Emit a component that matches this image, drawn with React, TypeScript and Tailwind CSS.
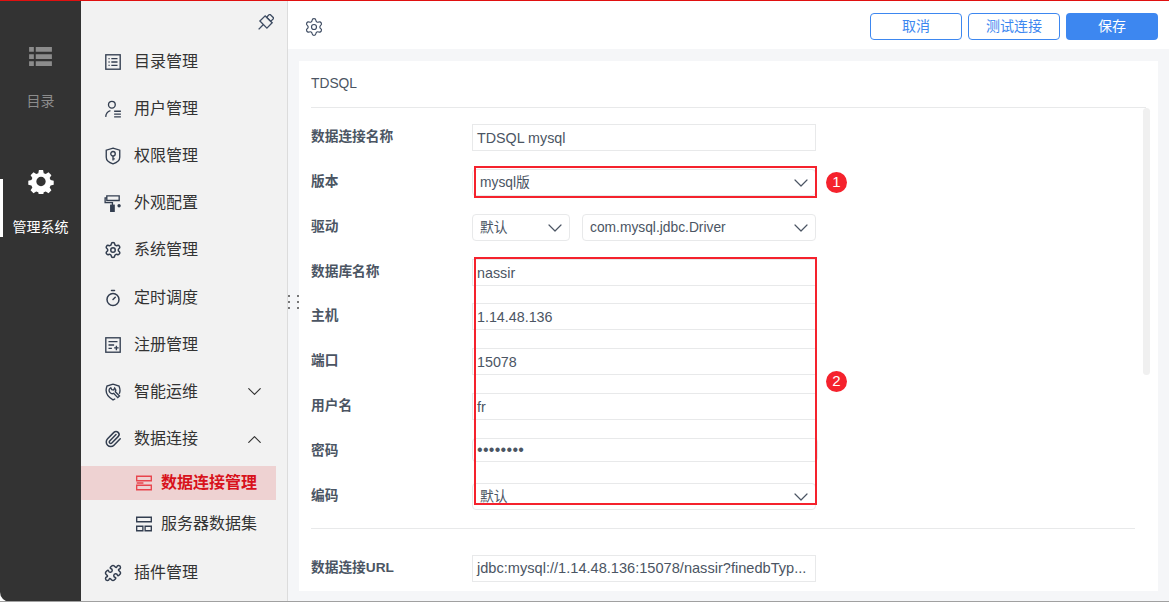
import React from 'react';
import { ChevronDown, ChevronUp, Paperclip, Puzzle, Settings, Timer } from 'lucide-react';

type IconProps = { className?: string };

const Svg: React.FC<React.PropsWithChildren<IconProps>> = ({ className, children }) => (
  <svg viewBox="0 0 16 16" fill="none" stroke="currentColor" strokeWidth="1.2" className={className}>
    {children}
  </svg>
);

const CatalogIcon = ({ className }: IconProps) => (
  <Svg className={className}>
    <rect x="1.6" y="1.6" width="12.8" height="12.8" />
    <path d="M4 5h1M6.5 5H12M4 8h1M6.5 8H12M4 11h1M6.5 11H12" />
  </Svg>
);

const UserIcon = ({ className }: IconProps) => (
  <Svg className={className}>
    <circle cx="7" cy="4.2" r="3" />
    <path d="M1.5 15c.2-3 2-5 4.2-5.6M9 10h6M9 12.5h6M9 15h6" />
  </Svg>
);

const ShieldIcon = ({ className }: IconProps) => (
  <Svg className={className}>
    <path d="M8 1l6 1.8v6.4c0 2.8-2.6 4.8-6 5.8-3.4-1-6-3-6-5.8V2.8z" />
    <circle cx="8" cy="6" r="2" />
    <path d="M8 8v4M8 10.5h1.6" />
  </Svg>
);

const RollerIcon = ({ className }: IconProps) => (
  <Svg className={className}>
    <path d="M2.5 3V1.6h11v4.2h-11V3zM2.5 3.5H1v4.2h6.5V10" />
    <rect x="6" y="10" width="3" height="5.4" fill="currentColor" />
    <circle cx="13.4" cy="10.4" r="1.5" fill="currentColor" stroke="none" />
  </Svg>
);

const RegisterIcon = ({ className }: IconProps) => (
  <Svg className={className}>
    <rect x="1.6" y="1.6" width="12.8" height="12.8" />
    <path d="M4 5h8M4 8h5M4 11h3M11 8.6v4M9 10.6h4" />
  </Svg>
);

const OpsIcon = ({ className }: IconProps) => (
  <Svg className={className}>
    <path d="M8 1l5.4 1.8c1 2.4 1 5 .2 6.8M8 1L2.6 2.8C1.2 6.5 1.8 11.5 8 15l2-1" />
    <path d="M6 4.2a3 3 0 0 0-1 4 3 3 0 0 0 3.6 1l3.6 3.8 1.6-1.5-3.7-3.7a3 3 0 0 0-.6-3.4L8.6 6.3 6.9 5.9z" />
  </Svg>
);

const ServerIcon = ({ className, split }: IconProps & { split?: boolean }) => (
  <Svg className={className}>
    <path d="M1.5 2h13v4h-13z" />
    {split ? (
      <path d="M1.5 10h5.5v4H1.5zM9 10h5.5v4H9z" />
    ) : (
      <path d="M1.5 8h6M14.5 10H1.5v4h13z" />
    )}
  </Svg>
);

const PinIcon = ({ className }: IconProps) => (
  <Svg className={className}>
    <g transform="rotate(45 8 8)">
      <rect x="5.4" y="-0.6" width="5.2" height="4" />
      <rect x="3.6" y="3.4" width="8.8" height="6.6" />
      <path d="M8 10v6" />
    </g>
  </Svg>
);

const navItems = [
  { label: '目录管理', Icon: CatalogIcon },
  { label: '用户管理', Icon: UserIcon },
  { label: '权限管理', Icon: ShieldIcon },
  { label: '外观配置', Icon: RollerIcon },
  { label: '系统管理', Icon: Settings },
  { label: '定时调度', Icon: Timer },
  { label: '注册管理', Icon: RegisterIcon },
];

const iconClass = 'mr-[12px] h-[18px] w-[18px] text-[#333e50]';

const Row: React.FC<React.PropsWithChildren<{ label: string; gap?: string }>> = ({ label, gap = 'mb-[18px]', children }) => (
  <div className={`flex h-[27px] items-center ${gap}`}>
    <div className="w-[161px] shrink-0 text-[13.7px] font-bold text-[#4b5563]">{label}</div>
    {children}
  </div>
);

const Field = ({ value }: { value: string }) => (
  <div className="flex h-[27px] w-[344px] items-center border border-[#e8e9ea] pl-[4px] pt-[2px] text-[14.3px] text-[#4b5563]">
    {value}
  </div>
);

const Select = ({ value, className }: { value: string; className: string }) => (
  <div className={`flex h-[27px] items-center justify-between rounded-sm border border-[#e8e9ea] pl-[7px] pr-[2px] text-[13.8px] text-[#4b5563] ${className}`}>
    <span className="pt-px">{value}</span>
    <ChevronDown className="h-[24px] w-[24px] text-[#4b5563]" strokeWidth={1.2} />
  </div>
);

const Badge = ({ n, className }: { n: number; className: string }) => (
  <div className={`absolute flex h-[21px] w-[21px] items-center justify-center rounded-full bg-[#f5222d] text-[15px] text-white ${className}`}>
    {n}
  </div>
);

export default function App() {
  const font = { fontFamily: '"Liberation Sans", "Noto Sans CJK SC", sans-serif' };
  return (
    <div className="relative flex h-[602px] w-[1169px] overflow-hidden bg-white" style={font}>
      <div className="absolute inset-x-0 top-0 z-20 h-px bg-[#e01010]" />
      <div className="absolute inset-x-0 bottom-0 z-20 h-px bg-[#a0a0a0]" />

      {/* Dark rail */}
      <div className="flex w-[81px] shrink-0 flex-col items-center rounded-bl-[10px] bg-[#333333]">
        <svg viewBox="0 0 24 20" className="mt-[47px] h-[19px] w-[23px] text-[#8c8c8c]" fill="currentColor">
          <path d="M0 0h5v5H0zM7 0h17v5H7zM0 7.5h5v5H0zM7 7.5h17v5H7zM0 15h5v5H0zM7 15h17v5H7z" />
        </svg>
        <div className="mt-[25px] text-[14px] leading-5 text-[#8c8c8c]">目录</div>
        <div className="relative mt-[68px] flex h-[58px] w-full flex-col items-center">
          <div className="absolute left-0 top-0 h-full w-[3px] bg-white" />
          <svg viewBox="0 0 24 24" className="mt-[-10px] h-[26px] w-[26px] text-white" fill="currentColor">
            <path
              fillRule="evenodd"
              d="M10 1h4l.6 3 2 .9 2.6-1.7 2.8 2.8-1.7 2.6.9 2 3 .6v4l-3 .6-.9 2 1.7 2.6-2.8 2.8-2.6-1.7-2 .9-.6 3h-4l-.6-3-2-.9-2.6 1.7-2.8-2.8 1.7-2.6-.9-2-3-.6v-4l3-.6.9-2-1.7-2.6 2.8-2.8 2.6 1.7 2-.9zM12 7.5a4.5 4.5 0 1 0 0 9 4.5 4.5 0 0 0 0-9z"
            />
          </svg>
          <div className="mt-[23px] text-[14px] leading-5 text-white">管理系统</div>
        </div>
      </div>

      {/* Menu */}
      <div className="relative flex w-[207px] shrink-0 flex-col border-r border-[#dcdcdc] bg-[#f2f2f2] text-[16px] text-[#333333]">
        <PinIcon className="absolute left-[175px] top-[14px] h-[18px] w-[18px] text-[#3f4d63]" />
        <div className="h-[38px]" />
        {navItems.map(({ label, Icon }) => (
          <div key={label} className="flex h-[47.2px] items-center pl-[23px]">
            <Icon className={iconClass} />
            <span>{label}</span>
          </div>
        ))}
        <div className="flex h-[47.2px] items-center pl-[23px]">
          <OpsIcon className={iconClass} />
          <span>智能运维</span>
          <ChevronDown className="ml-auto mr-[21px] h-[23px] w-[23px]" strokeWidth={1.2} />
        </div>
        <div className="flex h-[47.2px] items-center pl-[23px]">
          <Paperclip className={iconClass} />
          <span>数据连接</span>
          <ChevronUp className="ml-auto mr-[21px] h-[23px] w-[23px]" strokeWidth={1.2} />
        </div>
        <div className="mt-[3px] flex h-[34px] w-[195px] items-center bg-[#eed2d2] pl-[54px] font-bold text-[#d8121c]">
          <ServerIcon className="mr-[8px] h-[18px] w-[18px] text-[#e8444c]" />
          <span className="pt-px">数据连接管理</span>
        </div>
        <div className="mt-[7px] flex h-[34px] items-center pl-[54px]">
          <ServerIcon split className="mr-[8px] h-[18px] w-[18px] text-[#333e50]" />
          <span>服务器数据集</span>
        </div>
        <div className="mt-[9px] flex h-[47.2px] items-center pl-[23px]">
          <Puzzle className={iconClass} />
          <span>插件管理</span>
        </div>
      </div>

      {/* Main */}
      <div className="relative flex min-w-0 flex-1 flex-col bg-[#f5f6f8]">
        <div className="flex h-[49px] shrink-0 items-center justify-between bg-white pl-[16px] pr-[11px] pt-[4px]">
          <Settings className="h-5 w-5 text-[#3f4d63]" strokeWidth={1.4} />
          <div className="flex gap-[6px] text-[14px]">
            <button className="h-[27px] w-[92px] rounded-sm border border-[#3d87f0] bg-white text-[#3d87f0]">取消</button>
            <button className="h-[27px] w-[92px] rounded-sm border border-[#3d87f0] bg-white text-[#3d87f0]">测试连接</button>
            <button className="h-[27px] w-[92px] rounded-sm bg-[#3d87f0] text-white">保存</button>
          </div>
        </div>

        <div className="ml-[11px] mr-[11px] mt-[12px] h-[530px] bg-white px-[12px]">
          <div className="flex h-[47px] items-center border-b border-[#e8e9ea] text-[13.8px] text-[#4b5563]">TDSQL</div>
          <div className="relative pt-[16px]">
            <Row label="数据连接名称"><Field value="TDSQL mysql" /></Row>
            <Row label="版本"><Select value="mysql版" className="w-[344px]" /></Row>
            <Row label="驱动">
              <Select value="默认" className="mr-[12px] w-[98px]" />
              <Select value="com.mysql.jdbc.Driver" className="w-[234px]" />
            </Row>
            <Row label="数据库名称" gap="mb-[17px]"><Field value="nassir" /></Row>
            <Row label="主机"><Field value="1.14.48.136" /></Row>
            <Row label="端口"><Field value="15078" /></Row>
            <Row label="用户名"><Field value="fr" /></Row>
            <Row label="密码">
              <div className="-mt-[3px] flex h-[24px] w-[346px] items-center rounded-sm border border-[#e8e9ea] pl-[4px] text-[16px] tracking-[0.3px] text-[#4b5563]">
                ••••••••
              </div>
            </Row>
            <Row label="编码"><Select value="默认" className="w-[344px]" /></Row>
            <div className="mr-[11px] mt-[1px] border-t border-[#e8e9ea]" />
            <div className="mt-[26px] flex h-[27px] items-center">
              <div className="w-[161px] shrink-0 text-[13.7px] font-bold text-[#4b5563]">数据连接URL</div>
              <div className="flex h-[27px] w-[344px] items-center whitespace-nowrap border border-[#e8e9ea] pl-[4px] pt-px text-[14.6px] text-[#4b5563]">
                jdbc:mysql://1.14.48.136:15078/nassir?finedbTyp...
              </div>
            </div>
            <div className="absolute right-[-4px] top-0 h-[267px] w-[7px] rounded-full bg-[#f0f0f0]" />
          </div>
        </div>

        {/* Drag handle over the panel edge */}
        <div className="absolute left-0 top-[295px] grid grid-cols-2 gap-x-[7px] gap-y-[4px]">
          {[0, 1, 2, 3, 4, 5].map(i => (
            <span key={i} className="h-[2px] w-[2px] bg-[#777777]" />
          ))}
        </div>
      </div>

      {/* Annotations */}
      <div className="absolute left-[474px] top-[166px] h-[32px] w-[343px] border-2 border-[#f5222d]" />
      <div className="absolute left-[474px] top-[257px] h-[248px] w-[343px] border-2 border-[#f5222d]" />
      <Badge n={1} className="left-[826px] top-[172px]" />
      <Badge n={2} className="left-[826px] top-[371px]" />
    </div>
  );
}
